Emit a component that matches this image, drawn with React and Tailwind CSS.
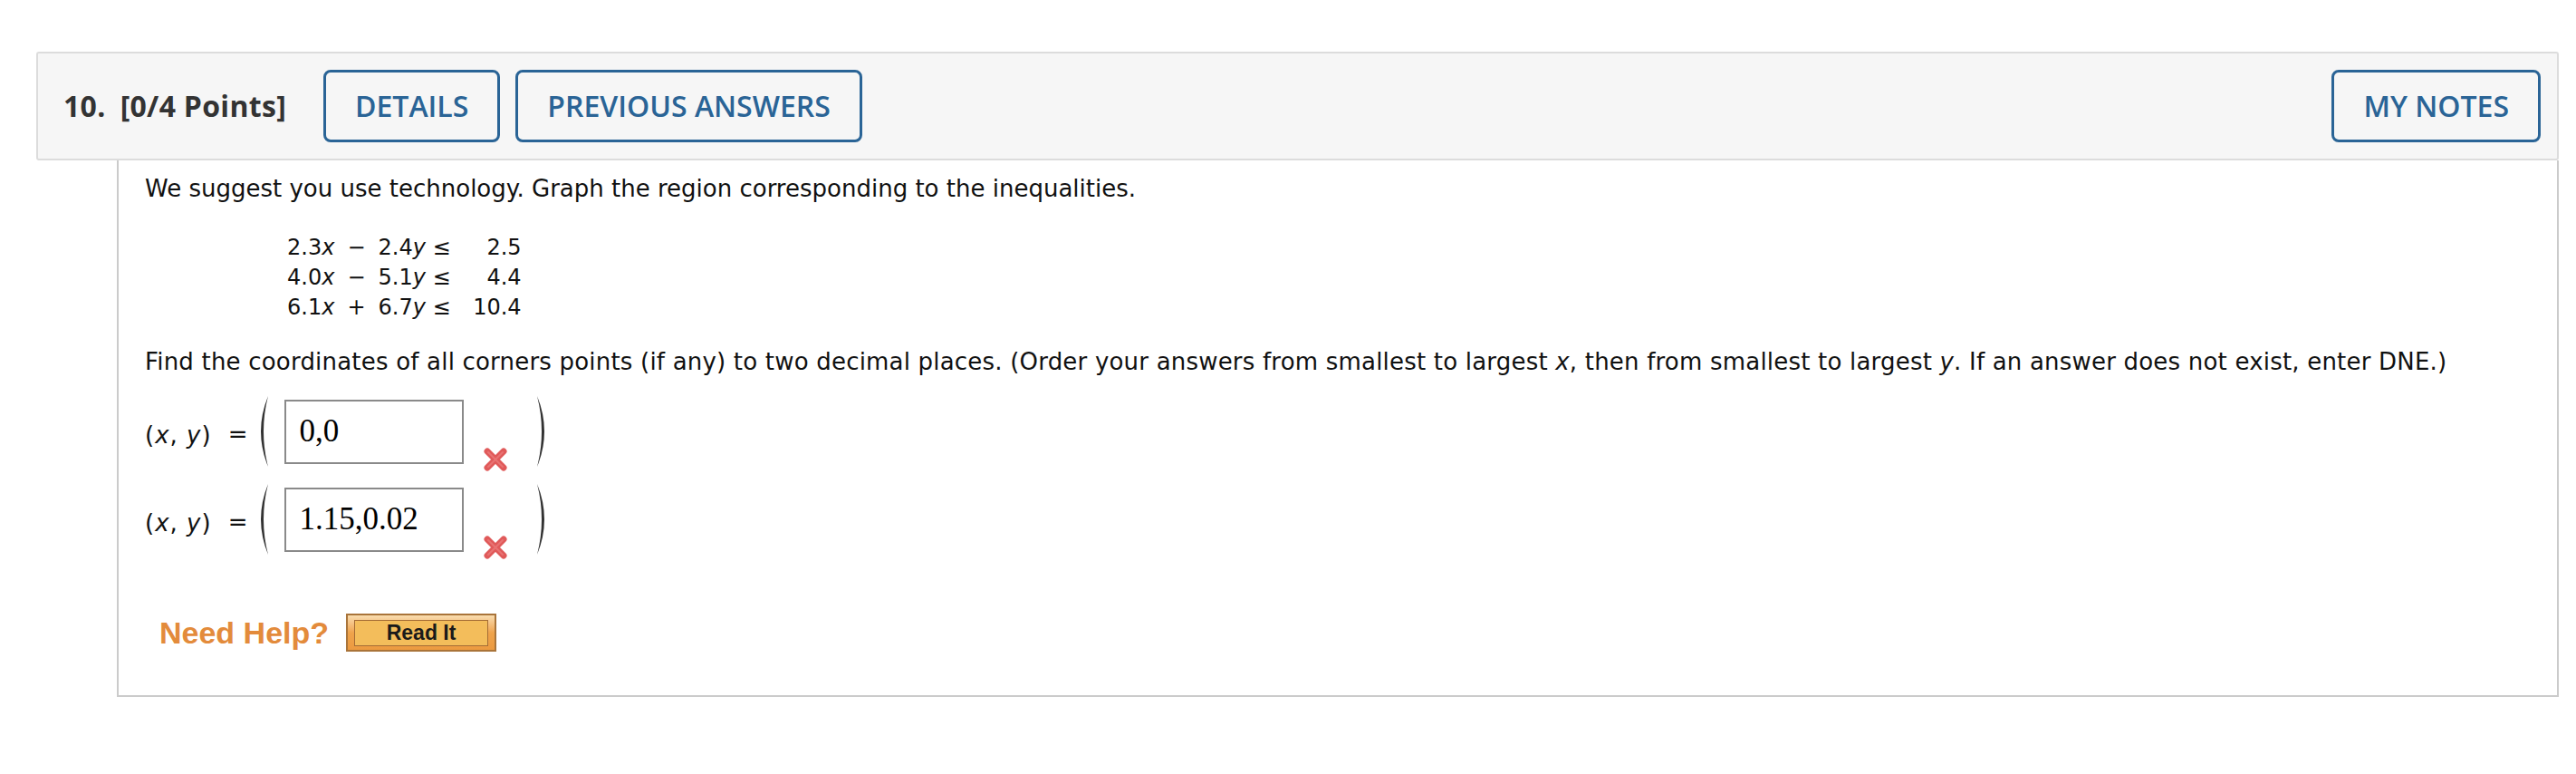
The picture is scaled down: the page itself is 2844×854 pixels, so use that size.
import React from 'react';

const ineqs = [
  { a: '2.3', op: '−', b: '2.4', c: '2.5' },
  { a: '4.0', op: '−', b: '5.1', c: '4.4' },
  { a: '6.1', op: '+', b: '6.7', c: '10.4' },
];

const answers = ['0,0', '1.15,0.02'];

// stretchy paren like the math renderer draws
function Paren({ right = false }) {
  return (
    <svg width="18" height="80" viewBox="0 0 18 80" className="shrink-0">
      {right ? (
        <path d="M3 1 Q19 40 3 79 Q13 40 3 1 Z" fill="#333" />
      ) : (
        <path d="M15 1 Q-1 40 15 79 Q5 40 15 1 Z" fill="#333" />
      )}
    </svg>
  );
}

function WrongMark() {
  return (
    <svg width="28" height="26" viewBox="0 0 28 26" className="shrink-0">
      <path d="M5 4 L23 22 M23 4 L5 22" stroke="#e05a5a" strokeWidth="7" strokeLinecap="round" />
      <path d="M6 5 L22 21 M22 5 L6 21" stroke="#ef8585" strokeWidth="2" strokeLinecap="round" opacity="0.6" />
    </svg>
  );
}

function HeaderButton({ children }) {
  return (
    <button className="h-[80px] px-[32px] rounded-[8px] border-[3px] border-[#2a6496] text-[#2a6496] text-[32px] font-semibold uppercase leading-none">
      {children}
    </button>
  );
}

export default function App() {
  return (
    <div className="min-h-screen bg-white pt-[57px] pl-[40px] pr-[19px]">
      {/* Header */}
      <div className="h-[120px] flex items-center border-2 border-[#dcdcdc] bg-[#f6f6f6] rounded-[3px] pl-[28px] pr-[18px] font-['Open_Sans',sans-serif]">
        <div className="text-[32px] font-bold text-[#333] leading-none tracking-[0.3px]">
          10.<span className="ml-[16px]">[0/4 Points]</span>
        </div>
        <div className="ml-[41px] flex gap-[17px]">
          <HeaderButton>Details</HeaderButton>
          <HeaderButton>Previous Answers</HeaderButton>
        </div>
        <div className="ml-auto">
          <HeaderButton>My Notes</HeaderButton>
        </div>
      </div>

      {/* Question body */}
      <div className="ml-[89px] h-[592px] border-2 border-t-0 border-[#cbcbcb] pt-[16px] pl-[29px] text-[26px] text-[#111] font-['DejaVu_Sans',Verdana,sans-serif]">
        <p className="leading-[30px]">
          We suggest you use technology. Graph the region corresponding to the inequalities.
        </p>

        <div className="mt-[34px] ml-[157px] grid grid-cols-[auto_auto_auto_auto] w-max text-[24px] leading-[33px]">
          {ineqs.map((r, i) => (
            <React.Fragment key={i}>
              <span className="whitespace-nowrap">
                {r.a}<i>x</i>
              </span>
              <span className="px-[14px] text-center">{r.op}</span>
              <span className="whitespace-nowrap">
                {r.b}<i>y</i> ≤
              </span>
              <span className="text-right pl-[8px] min-w-[78px]">{r.c}</span>
            </React.Fragment>
          ))}
        </div>

        <p className="mt-[28px] leading-[30px] tracking-[0.2px]">
          Find the coordinates of all corners points (if any) to two decimal places. (Order your answers from smallest to largest <i>x</i>, then from smallest to largest <i>y</i>. If an answer does not exist, enter DNE.)
        </p>

        {answers.map((val, i) => (
          <div key={i} className={`flex items-center h-[80px] ${i === 0 ? 'mt-[22px]' : 'mt-[17px]'}`}>
            <span className="leading-none pt-[8px] tracking-[1px]">
              (<i>x</i>, <i>y</i>)
            </span>
            <span className="ml-[18px] leading-none pt-[6px]">=</span>
            <div className="ml-[8px]">
              <Paren />
            </div>
            <input
              readOnly
              value={val}
              className="ml-[15px] w-[198px] h-[71px] border-2 border-[#8a8a8a] bg-white px-[14px] text-[35px] text-black font-['Liberation_Serif',serif] outline-none"
            />
            <div className="ml-[21px] self-end translate-y-[4px]">
              <WrongMark />
            </div>
            <div className="ml-[29px]">
              <Paren right />
            </div>
          </div>
        ))}

        <div className="mt-[64px] ml-[16px] flex items-center gap-[19px] font-['Liberation_Sans',Arial,sans-serif]">
          <span className="text-[34px] font-bold text-[#e38b3b] leading-none">Need Help?</span>
          <div className="w-[166px] h-[42px] border-2 border-[#a9743a] bg-gradient-to-b from-[#f9dcae] via-[#efa44c] to-[#ec9a40] px-[7px] pt-[5px] pb-[4px]">
            <div className="h-full border-[1.5px] border-[#a46c35] bg-[#f3bd5b] flex items-center justify-center text-[23px] font-bold text-[#1a1a1a] leading-none">
              Read It
            </div>
          </div>
        </div>
      </div>
    </div>
  );
}
